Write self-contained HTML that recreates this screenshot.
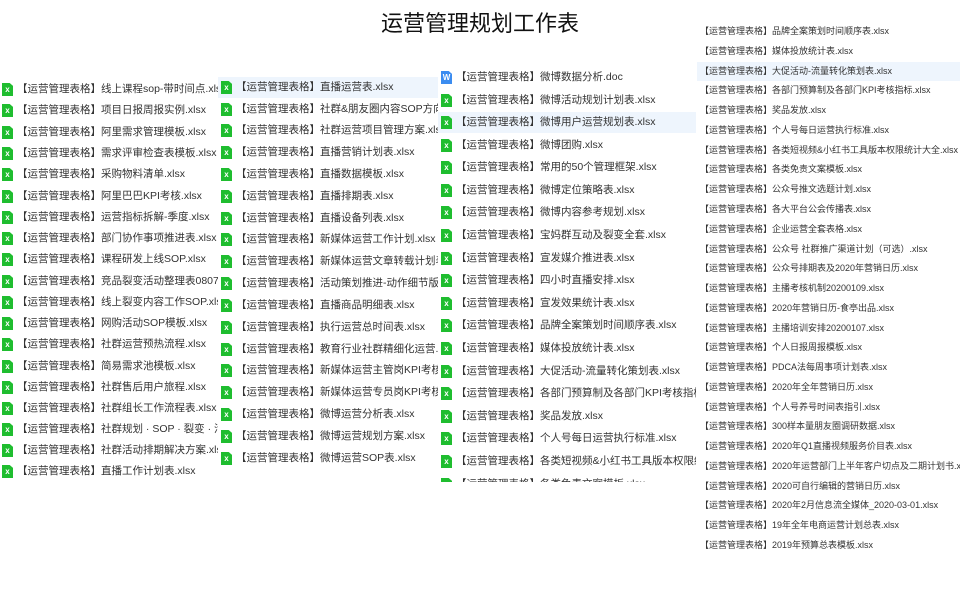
<!DOCTYPE html>
<html><head><meta charset="utf-8"><style>
*{margin:0;padding:0;box-sizing:border-box}
body{width:960px;height:600px;background:#fff;position:relative;overflow:hidden;font-family:"Liberation Sans","Noto Sans CJK SC",sans-serif;color:#333}
h1{position:absolute;left:0;width:960px;top:6px;text-align:center;font-weight:normal;font-size:22px;color:#111;font-family:"Liberation Sans","Noto Sans CJK SC",sans-serif}
.p{position:absolute;background:#fff;overflow:hidden}
.r{position:absolute;left:0;right:0;height:21px;white-space:nowrap;font-size:10.5px;line-height:21px}
.r.h{background:#eef5fd}
.i{position:absolute;top:4px;width:11px;height:13px;background:#1fbd2f;color:#fff;font-size:8px;line-height:13px;text-align:center;font-weight:bold;clip-path:polygon(0 0,70% 0,100% 22%,100% 100%,0 100%)}
.i.w{background:#3b8cf0}
.t{position:absolute;top:0}
.c4 .r{font-size:9px;height:19px;line-height:19px}
</style></head><body>
<h1>运营管理规划工作表</h1>

<div class="p" style="left:0;top:0;width:218px;height:600px">
<div class="r" style="top:79px"><span class="i" style="left:2px">x</span><span class="t" style="left:17px">【运营管理表格】线上课程sop-带时间点.xlsx</span></div>
<div class="r" style="top:100px"><span class="i" style="left:2px">x</span><span class="t" style="left:17px">【运营管理表格】项目日报周报实例.xlsx</span></div>
<div class="r" style="top:122px"><span class="i" style="left:2px">x</span><span class="t" style="left:17px">【运营管理表格】阿里需求管理模板.xlsx</span></div>
<div class="r" style="top:143px"><span class="i" style="left:2px">x</span><span class="t" style="left:17px">【运营管理表格】需求评审检查表模板.xlsx</span></div>
<div class="r" style="top:164px"><span class="i" style="left:2px">x</span><span class="t" style="left:17px">【运营管理表格】采购物料清单.xlsx</span></div>
<div class="r" style="top:186px"><span class="i" style="left:2px">x</span><span class="t" style="left:17px">【运营管理表格】阿里巴巴KPI考核.xlsx</span></div>
<div class="r" style="top:207px"><span class="i" style="left:2px">x</span><span class="t" style="left:17px">【运营管理表格】运营指标拆解-季度.xlsx</span></div>
<div class="r" style="top:228px"><span class="i" style="left:2px">x</span><span class="t" style="left:17px">【运营管理表格】部门协作事项推进表.xlsx</span></div>
<div class="r" style="top:249px"><span class="i" style="left:2px">x</span><span class="t" style="left:17px">【运营管理表格】课程研发上线SOP.xlsx</span></div>
<div class="r" style="top:271px"><span class="i" style="left:2px">x</span><span class="t" style="left:17px">【运营管理表格】竞品裂变活动整理表0807.xlsx</span></div>
<div class="r" style="top:292px"><span class="i" style="left:2px">x</span><span class="t" style="left:17px">【运营管理表格】线上裂变内容工作SOP.xlsx</span></div>
<div class="r" style="top:313px"><span class="i" style="left:2px">x</span><span class="t" style="left:17px">【运营管理表格】网购活动SOP模板.xlsx</span></div>
<div class="r" style="top:334px"><span class="i" style="left:2px">x</span><span class="t" style="left:17px">【运营管理表格】社群运营预热流程.xlsx</span></div>
<div class="r" style="top:356px"><span class="i" style="left:2px">x</span><span class="t" style="left:17px">【运营管理表格】简易需求池模板.xlsx</span></div>
<div class="r" style="top:377px"><span class="i" style="left:2px">x</span><span class="t" style="left:17px">【运营管理表格】社群售后用户旅程.xlsx</span></div>
<div class="r" style="top:398px"><span class="i" style="left:2px">x</span><span class="t" style="left:17px">【运营管理表格】社群组长工作流程表.xlsx</span></div>
<div class="r" style="top:419px"><span class="i" style="left:2px">x</span><span class="t" style="left:17px">【运营管理表格】社群规划 · SOP · 裂变 · 活动.xlsx</span></div>
<div class="r" style="top:440px"><span class="i" style="left:2px">x</span><span class="t" style="left:17px">【运营管理表格】社群活动排期解决方案.xlsx</span></div>
<div class="r" style="top:461px"><span class="i" style="left:2px">x</span><span class="t" style="left:17px">【运营管理表格】直播工作计划表.xlsx</span></div>
</div>

<div class="p" style="left:218px;top:77px;width:220px;height:397px">
<div class="r h" style="top:0px"><span class="i" style="left:3px">x</span><span class="t" style="left:18px">【运营管理表格】直播运营表.xlsx</span></div>
<div class="r" style="top:22px"><span class="i" style="left:3px">x</span><span class="t" style="left:18px">【运营管理表格】社群&amp;朋友圈内容SOP方向.xlsx</span></div>
<div class="r" style="top:43px"><span class="i" style="left:3px">x</span><span class="t" style="left:18px">【运营管理表格】社群运营项目管理方案.xlsx</span></div>
<div class="r" style="top:65px"><span class="i" style="left:3px">x</span><span class="t" style="left:18px">【运营管理表格】直播营销计划表.xlsx</span></div>
<div class="r" style="top:87px"><span class="i" style="left:3px">x</span><span class="t" style="left:18px">【运营管理表格】直播数据模板.xlsx</span></div>
<div class="r" style="top:109px"><span class="i" style="left:3px">x</span><span class="t" style="left:18px">【运营管理表格】直播排期表.xlsx</span></div>
<div class="r" style="top:131px"><span class="i" style="left:3px">x</span><span class="t" style="left:18px">【运营管理表格】直播设备列表.xlsx</span></div>
<div class="r" style="top:152px"><span class="i" style="left:3px">x</span><span class="t" style="left:18px">【运营管理表格】新媒体运营工作计划.xlsx</span></div>
<div class="r" style="top:174px"><span class="i" style="left:3px">x</span><span class="t" style="left:18px">【运营管理表格】新媒体运营文章转载计划表.xlsx</span></div>
<div class="r" style="top:196px"><span class="i" style="left:3px">x</span><span class="t" style="left:18px">【运营管理表格】活动策划推进-动作细节版.xlsx</span></div>
<div class="r" style="top:218px"><span class="i" style="left:3px">x</span><span class="t" style="left:18px">【运营管理表格】直播商品明细表.xlsx</span></div>
<div class="r" style="top:240px"><span class="i" style="left:3px">x</span><span class="t" style="left:18px">【运营管理表格】执行运营总时间表.xlsx</span></div>
<div class="r" style="top:262px"><span class="i" style="left:3px">x</span><span class="t" style="left:18px">【运营管理表格】教育行业社群精细化运营.xlsx</span></div>
<div class="r" style="top:283px"><span class="i" style="left:3px">x</span><span class="t" style="left:18px">【运营管理表格】新媒体运营主管岗KPI考核表.xlsx</span></div>
<div class="r" style="top:305px"><span class="i" style="left:3px">x</span><span class="t" style="left:18px">【运营管理表格】新媒体运营专员岗KPI考核表.xlsx</span></div>
<div class="r" style="top:327px"><span class="i" style="left:3px">x</span><span class="t" style="left:18px">【运营管理表格】微博运营分析表.xlsx</span></div>
<div class="r" style="top:349px"><span class="i" style="left:3px">x</span><span class="t" style="left:18px">【运营管理表格】微博运营规划方案.xlsx</span></div>
<div class="r" style="top:371px"><span class="i" style="left:3px">x</span><span class="t" style="left:18px">【运营管理表格】微博运营SOP表.xlsx</span></div>
<div class="r" style="top:393px"><span class="i" style="left:3px">x</span><span class="t" style="left:18px">【运营管理表格】微博运营表.xlsx</span></div>
</div>

<div class="p" style="left:438px;top:67px;width:258px;height:415px">
<div class="r" style="top:0px"><span class="i w" style="left:3px">W</span><span class="t" style="left:18px">【运营管理表格】微博数据分析.doc</span></div>
<div class="r" style="top:23px"><span class="i" style="left:3px">x</span><span class="t" style="left:18px">【运营管理表格】微博活动规划计划表.xlsx</span></div>
<div class="r h" style="top:45px"><span class="i" style="left:3px">x</span><span class="t" style="left:18px">【运营管理表格】微博用户运营规划表.xlsx</span></div>
<div class="r" style="top:68px"><span class="i" style="left:3px">x</span><span class="t" style="left:18px">【运营管理表格】微博团购.xlsx</span></div>
<div class="r" style="top:90px"><span class="i" style="left:3px">x</span><span class="t" style="left:18px">【运营管理表格】常用的50个管理框架.xlsx</span></div>
<div class="r" style="top:113px"><span class="i" style="left:3px">x</span><span class="t" style="left:18px">【运营管理表格】微博定位策略表.xlsx</span></div>
<div class="r" style="top:135px"><span class="i" style="left:3px">x</span><span class="t" style="left:18px">【运营管理表格】微博内容参考规划.xlsx</span></div>
<div class="r" style="top:158px"><span class="i" style="left:3px">x</span><span class="t" style="left:18px">【运营管理表格】宝妈群互动及裂变全套.xlsx</span></div>
<div class="r" style="top:181px"><span class="i" style="left:3px">x</span><span class="t" style="left:18px">【运营管理表格】宣发媒介推进表.xlsx</span></div>
<div class="r" style="top:203px"><span class="i" style="left:3px">x</span><span class="t" style="left:18px">【运营管理表格】四小时直播安排.xlsx</span></div>
<div class="r" style="top:226px"><span class="i" style="left:3px">x</span><span class="t" style="left:18px">【运营管理表格】宣发效果统计表.xlsx</span></div>
<div class="r" style="top:248px"><span class="i" style="left:3px">x</span><span class="t" style="left:18px">【运营管理表格】品牌全案策划时间顺序表.xlsx</span></div>
<div class="r" style="top:271px"><span class="i" style="left:3px">x</span><span class="t" style="left:18px">【运营管理表格】媒体投放统计表.xlsx</span></div>
<div class="r" style="top:294px"><span class="i" style="left:3px">x</span><span class="t" style="left:18px">【运营管理表格】大促活动-流量转化策划表.xlsx</span></div>
<div class="r" style="top:316px"><span class="i" style="left:3px">x</span><span class="t" style="left:18px">【运营管理表格】各部门预算制及各部门KPI考核指标.xlsx</span></div>
<div class="r" style="top:339px"><span class="i" style="left:3px">x</span><span class="t" style="left:18px">【运营管理表格】奖品发放.xlsx</span></div>
<div class="r" style="top:361px"><span class="i" style="left:3px">x</span><span class="t" style="left:18px">【运营管理表格】个人号每日运营执行标准.xlsx</span></div>
<div class="r" style="top:384px"><span class="i" style="left:3px">x</span><span class="t" style="left:18px">【运营管理表格】各类短视频&amp;小红书工具版本权限统计大全.xlsx</span></div>
<div class="r" style="top:407px"><span class="i" style="left:3px">x</span><span class="t" style="left:18px">【运营管理表格】各类免责文案模板.xlsx</span></div>
</div>

<div class="p c4" style="left:697px;top:22px;width:263px;height:540px">
<div class="r" style="top:0px"><span class="t" style="left:3px">【运营管理表格】品牌全案策划时间顺序表.xlsx</span></div>
<div class="r" style="top:20px"><span class="t" style="left:3px">【运营管理表格】媒体投放统计表.xlsx</span></div>
<div class="r h" style="top:40px"><span class="t" style="left:3px">【运营管理表格】大促活动-流量转化策划表.xlsx</span></div>
<div class="r" style="top:59px"><span class="t" style="left:3px">【运营管理表格】各部门预算制及各部门KPI考核指标.xlsx</span></div>
<div class="r" style="top:79px"><span class="t" style="left:3px">【运营管理表格】奖品发放.xlsx</span></div>
<div class="r" style="top:99px"><span class="t" style="left:3px">【运营管理表格】个人号每日运营执行标准.xlsx</span></div>
<div class="r" style="top:119px"><span class="t" style="left:3px">【运营管理表格】各类短视频&amp;小红书工具版本权限统计大全.xlsx</span></div>
<div class="r" style="top:138px"><span class="t" style="left:3px">【运营管理表格】各类免责文案模板.xlsx</span></div>
<div class="r" style="top:158px"><span class="t" style="left:3px">【运营管理表格】公众号推文选题计划.xlsx</span></div>
<div class="r" style="top:178px"><span class="t" style="left:3px">【运营管理表格】各大平台公会传播表.xlsx</span></div>
<div class="r" style="top:198px"><span class="t" style="left:3px">【运营管理表格】企业运营全套表格.xlsx</span></div>
<div class="r" style="top:218px"><span class="t" style="left:3px">【运营管理表格】公众号 社群推广渠道计划（可选）.xlsx</span></div>
<div class="r" style="top:237px"><span class="t" style="left:3px">【运营管理表格】公众号排期表及2020年营销日历.xlsx</span></div>
<div class="r" style="top:257px"><span class="t" style="left:3px">【运营管理表格】主播考核机制20200109.xlsx</span></div>
<div class="r" style="top:277px"><span class="t" style="left:3px">【运营管理表格】2020年营销日历-食亭出品.xlsx</span></div>
<div class="r" style="top:297px"><span class="t" style="left:3px">【运营管理表格】主播培训安排20200107.xlsx</span></div>
<div class="r" style="top:316px"><span class="t" style="left:3px">【运营管理表格】个人日报周报模板.xlsx</span></div>
<div class="r" style="top:336px"><span class="t" style="left:3px">【运营管理表格】PDCA法每周事项计划表.xlsx</span></div>
<div class="r" style="top:356px"><span class="t" style="left:3px">【运营管理表格】2020年全年营销日历.xlsx</span></div>
<div class="r" style="top:376px"><span class="t" style="left:3px">【运营管理表格】个人号养号时间表指引.xlsx</span></div>
<div class="r" style="top:395px"><span class="t" style="left:3px">【运营管理表格】300样本量朋友圈调研数据.xlsx</span></div>
<div class="r" style="top:415px"><span class="t" style="left:3px">【运营管理表格】2020年Q1直播视频服务价目表.xlsx</span></div>
<div class="r" style="top:435px"><span class="t" style="left:3px">【运营管理表格】2020年运营部门上半年客户切点及二期计划书.xlsx</span></div>
<div class="r" style="top:455px"><span class="t" style="left:3px">【运营管理表格】2020可自行编辑的营销日历.xlsx</span></div>
<div class="r" style="top:474px"><span class="t" style="left:3px">【运营管理表格】2020年2月信息流全媒体_2020-03-01.xlsx</span></div>
<div class="r" style="top:494px"><span class="t" style="left:3px">【运营管理表格】19年全年电商运营计划总表.xlsx</span></div>
<div class="r" style="top:514px"><span class="t" style="left:3px">【运营管理表格】2019年预算总表模板.xlsx</span></div>
</div>
</body></html>
